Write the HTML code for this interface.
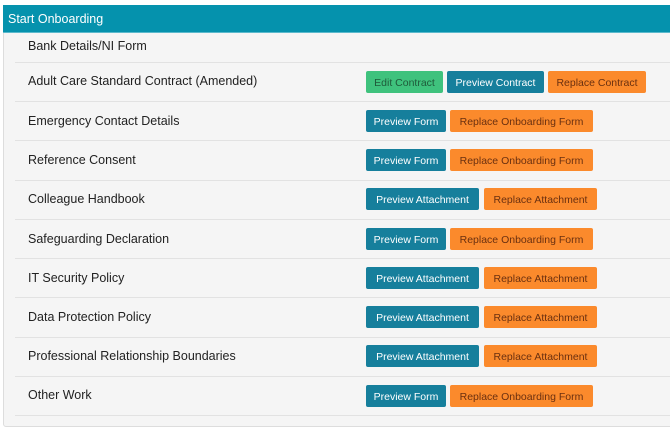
<!DOCTYPE html>
<html><head><style>
body{margin:0;width:670px;height:431px;background:#fff;position:relative;overflow:hidden;font-family:"Liberation Sans",sans-serif;}
.card{position:absolute;left:3px;top:5px;width:670px;height:422px;background:#f5f5f5;border:1px solid #ddd;border-radius:3px;box-sizing:border-box;}
.hd{position:absolute;left:3px;top:5px;width:667px;height:28px;background:#0592ad;color:#fff;font-size:12.5px;line-height:28px;padding-left:5px;box-sizing:border-box;border-bottom:1px solid #5bb9cc;}
.l{position:absolute;left:28px;font-size:12.5px;color:#222;}
.d{position:absolute;left:15px;width:655px;height:1px;background:#e2e2e2;}
.b{position:absolute;height:22px;line-height:24px;font-size:10.5px;text-align:center;border-radius:2px;box-sizing:border-box;}
.g{background:#3fc27d;color:#1f5a3a;}
.t{background:#167f9c;color:#fff;}
.o{background:#fb8a2c;color:#6a3010;}
</style></head><body>
<div class="card"></div>
<div class="hd">Start Onboarding</div>
<div class="l" style="top:39px">Bank Details/NI Form</div>
<div class="d" style="top:62px"></div>
<div class="l" style="top:74px">Adult Care Standard Contract (Amended)</div>
<div class="b g" style="left:366px;top:71px;width:77px">Edit Contract</div>
<div class="b t" style="left:447px;top:71px;width:97px">Preview Contract</div>
<div class="b o" style="left:548px;top:71px;width:98px">Replace Contract</div>
<div class="d" style="top:101px"></div>
<div class="l" style="top:114px">Emergency Contact Details</div>
<div class="b t" style="left:366px;top:110px;width:80px">Preview Form</div>
<div class="b o" style="left:450px;top:110px;width:143px">Replace Onboarding Form</div>
<div class="d" style="top:140px"></div>
<div class="l" style="top:153px">Reference Consent</div>
<div class="b t" style="left:366px;top:149px;width:80px">Preview Form</div>
<div class="b o" style="left:450px;top:149px;width:143px">Replace Onboarding Form</div>
<div class="d" style="top:180px"></div>
<div class="l" style="top:192px">Colleague Handbook</div>
<div class="b t" style="left:366px;top:188px;width:113px">Preview Attachment</div>
<div class="b o" style="left:484px;top:188px;width:113px">Replace Attachment</div>
<div class="d" style="top:219px"></div>
<div class="l" style="top:232px">Safeguarding Declaration</div>
<div class="b t" style="left:366px;top:228px;width:80px">Preview Form</div>
<div class="b o" style="left:450px;top:228px;width:143px">Replace Onboarding Form</div>
<div class="d" style="top:258px"></div>
<div class="l" style="top:271px">IT Security Policy</div>
<div class="b t" style="left:366px;top:267px;width:113px">Preview Attachment</div>
<div class="b o" style="left:484px;top:267px;width:113px">Replace Attachment</div>
<div class="d" style="top:297px"></div>
<div class="l" style="top:310px">Data Protection Policy</div>
<div class="b t" style="left:366px;top:306px;width:113px">Preview Attachment</div>
<div class="b o" style="left:484px;top:306px;width:113px">Replace Attachment</div>
<div class="d" style="top:337px"></div>
<div class="l" style="top:349px">Professional Relationship Boundaries</div>
<div class="b t" style="left:366px;top:345px;width:113px">Preview Attachment</div>
<div class="b o" style="left:484px;top:345px;width:113px">Replace Attachment</div>
<div class="d" style="top:376px"></div>
<div class="l" style="top:388px">Other Work</div>
<div class="b t" style="left:366px;top:385px;width:80px">Preview Form</div>
<div class="b o" style="left:450px;top:385px;width:143px">Replace Onboarding Form</div>
<div class="d" style="top:415px"></div>
</body></html>
